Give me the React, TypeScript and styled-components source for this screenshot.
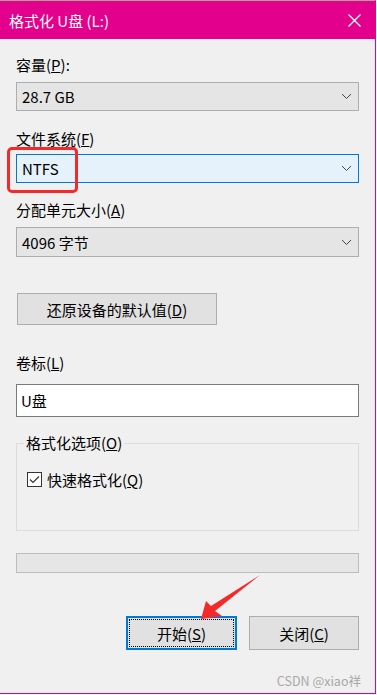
import React from "react";
import styled, { createGlobalStyle } from "styled-components";

const Global = createGlobalStyle`
  html, body { margin: 0; padding: 0; background: #f4f4f4; }
  * { box-sizing: border-box; }
  body { font-family: "Noto Sans CJK SC", "Noto Sans", sans-serif; }
`;

const Win = styled.div`
  position: relative;
  width: 376px;
  height: 694px;
  border-top: 1px solid #a8a596;
  border-right: 1px solid #e3008c;
  border-bottom: 1px solid #e3008c;
  background: #f0f0f0;
  display: flex;
  flex-direction: column;
  font-size: 15px;
  color: #000;
`;

const TitleBar = styled.div`
  height: 38px;
  flex: none;
  background: #e3008c;
  display: flex;
  align-items: center;
  justify-content: space-between;
  padding: 0 14px 0 9px;
  color: #fff;
  font-size: 15px;
`;

const Body = styled.div`
  flex: 1;
  display: flex;
  flex-direction: column;
  padding: 16px 16px 0 16px;
`;

const Label = styled.div<{ $mt?: number }>`
  height: 20px;
  line-height: 20px;
  margin-top: ${(p) => p.$mt ?? 0}px;
  white-space: nowrap;
`;

const Combo = styled.div<{ $mt: number; $h: number; $focus?: boolean }>`
  margin-top: ${(p) => p.$mt}px;
  height: ${(p) => p.$h}px;
  border: 1px solid ${(p) => (p.$focus ? "#0078d7" : "#adadad")};
  background: ${(p) => (p.$focus ? "#e5f1fb" : "#e5e5e5")};
  display: flex;
  align-items: center;
  justify-content: space-between;
  padding: 0 6px 0 5px;
`;

const Button = styled.div<{ $w: number; $h: number; $primary?: boolean }>`
  width: ${(p) => p.$w}px;
  height: ${(p) => p.$h}px;
  border: ${(p) => (p.$primary ? "2px solid #0078d7" : "1px solid #adadad")};
  background: #e1e1e1;
  display: flex;
  align-items: center;
  justify-content: center;
  padding: ${(p) => (p.$primary ? "1px" : "0")};
`;

const FocusRect = styled.div`
  width: 100%;
  height: 100%;
  border: 1px dotted #000;
  display: flex;
  align-items: center;
  justify-content: center;
`;

const ResetRow = styled.div`
  margin-top: 36px;
  padding-left: 1px;
`;

const TextBox = styled.div`
  margin-top: 11px;
  height: 33px;
  border: 1px solid #7a7a7a;
  background: #fff;
  display: flex;
  align-items: center;
  padding-left: 4px;
`;

const Group = styled.div`
  position: relative;
  margin-top: 26px;
  height: 88px;
  border: 1px solid #dcdcdc;
  padding: 25px 0 0 10px;
`;

const Legend = styled.div`
  position: absolute;
  top: -11px;
  left: 7px;
  padding: 0 2px;
  background: #f0f0f0;
  line-height: 20px;
`;

const CheckRow = styled.div`
  display: flex;
  align-items: center;
  gap: 5px;
`;

const CheckBox = styled.div`
  width: 15px;
  height: 15px;
  border: 1px solid #333;
  background: #fff;
  display: flex;
  align-items: center;
  justify-content: center;
`;

const Progress = styled.div`
  margin-top: 22px;
  height: 20px;
  border: 1px solid #bcbcbc;
  background: #e6e6e6;
`;

const ButtonRow = styled.div`
  margin-top: 43px;
  display: flex;
  justify-content: flex-end;
  gap: 12px;
`;

const Watermark = styled.div`
  margin-top: 22px;
  text-align: right;
  color: #a8a8a8;
  font-size: 12.5px;
  line-height: 18px;
  margin-right: -2px;
`;

const Highlight = styled.div`
  position: absolute;
  left: 7px;
  top: 146px;
  width: 71px;
  height: 46px;
  border: 3px solid #f42a2a;
  border-radius: 5px;
`;

const ArrowSvg = styled.svg`
  position: absolute;
  left: 0;
  top: 0;
  pointer-events: none;
`;

const Chevron = () => (
  <svg width="11" height="7" viewBox="0 0 11 7">
    <path d="M1 1 L5.5 5.5 L10 1" fill="none" stroke="#444" strokeWidth="1" />
  </svg>
);

export default function App() {
  return (
    <>
      <Global />
      <Win>
        <TitleBar>
          <span>格式化 U盘 (L:)</span>
          <svg width="13" height="13" viewBox="0 0 13 13">
            <path d="M0.5 0.5 L12.5 12.5 M12.5 0.5 L0.5 12.5" stroke="#fff" strokeWidth="1.2" />
          </svg>
        </TitleBar>
        <Body>
          <Label>
            容量(<u>P</u>):
          </Label>
          <Combo $mt={7} $h={29}>
            <span>28.7 GB</span>
            <Chevron />
          </Combo>
          <Label $mt={18}>
            文件系统(<u>F</u>)
          </Label>
          <Combo $mt={5} $h={29} $focus>
            <span>NTFS</span>
            <Chevron />
          </Combo>
          <Label $mt={17}>
            分配单元大小(<u>A</u>)
          </Label>
          <Combo $mt={7} $h={30}>
            <span>4096 字节</span>
            <Chevron />
          </Combo>
          <ResetRow>
            <Button $w={200} $h={32}>
              还原设备的默认值(<u>D</u>)
            </Button>
          </ResetRow>
          <Label $mt={28}>
            卷标(<u>L</u>)
          </Label>
          <TextBox>U盘</TextBox>
          <Group>
            <Legend>
              格式化选项(<u>O</u>)
            </Legend>
            <CheckRow>
              <CheckBox>
                <svg width="11" height="9" viewBox="0 0 11 9">
                  <path d="M1 4.5 L4 7.5 L10 1.5" fill="none" stroke="#333" strokeWidth="1.2" />
                </svg>
              </CheckBox>
              <span>
                快速格式化(<u>Q</u>)
              </span>
            </CheckRow>
          </Group>
          <Progress />
          <ButtonRow>
            <Button $w={111} $h={34} $primary>
              <FocusRect>
                开始(<u>S</u>)
              </FocusRect>
            </Button>
            <Button $w={110} $h={34}>
              关闭(<u>C</u>)
            </Button>
          </ButtonRow>
          <Watermark>CSDN @xiao祥</Watermark>
        </Body>
        <Highlight />
        <ArrowSvg width="376" height="694" viewBox="0 0 376 694">
          <polygon
            points="201,618 206,600 211,605 260,574 215,610 222,615"
            fill="#f42a2a"
          />
        </ArrowSvg>
      </Win>
    </>
  );
}
